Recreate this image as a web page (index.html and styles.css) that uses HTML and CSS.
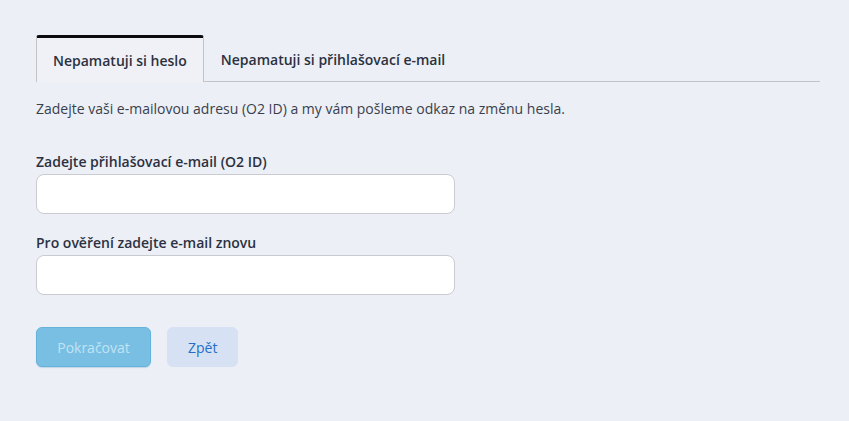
FILE: index.html
```html
<!DOCTYPE html>
<html lang="cs">
<head>
<meta charset="utf-8">
<title>Zapomenuté heslo</title>
<link rel="stylesheet" href="styles.css">
</head>
<body>
<main class="page">
  <nav class="tabs">
    <a class="tab tab--active">Nepamatuji si heslo</a>
    <a class="tab">Nepamatuji si přihlašovací e-mail</a>
  </nav>
  <p class="intro">Zadejte vaši e-mailovou adresu (O2 ID) a my vám pošleme odkaz na změnu hesla.</p>
  <form class="form">
    <label class="field">
      <span class="field__label">Zadejte přihlašovací e-mail (O2 ID)</span>
      <input class="field__input" type="email">
    </label>
    <label class="field">
      <span class="field__label">Pro ověření zadejte e-mail znovu</span>
      <input class="field__input" type="email">
    </label>
    <div class="actions">
      <button class="btn btn--primary" type="button" disabled>Pokračovat</button>
      <button class="btn btn--secondary" type="button">Zpět</button>
    </div>
  </form>
</main>
</body>
</html>
```
FILE: styles.css
```css
html, body {
  margin: 0;
  padding: 0;
  background: #eceff6;
}

body {
  font-family: "Open Sans", "Noto Sans", sans-serif;
  font-size: 14px;
  color: #2f3442;
}

.page {
  padding: 35px 29px 40px 36px;
}

.tabs {
  display: flex;
  border-bottom: 1px solid #c4c4c8;
  height: 46px;
}

.tab {
  display: flex;
  align-items: center;
  padding: 2px 17px 0;
  font-weight: 600;
  color: #2b3140;
  cursor: pointer;
  box-sizing: border-box;
  height: 47px;
}

.tab--active {
  background: #eff1f7;
  border-top: 3px solid #0b0b0f;
  border-left: 1px solid #c4c4c8;
  border-right: 1px solid #c4c4c8;
  border-radius: 3px 3px 0 0;
  padding: 0 16px 0 16px;
}

.intro {
  margin: 17px 0 0;
  line-height: 20px;
  color: #3a3f4c;
}

.form {
  margin-top: 33px;
  display: flex;
  flex-direction: column;
}

.field {
  display: flex;
  flex-direction: column;
  margin-bottom: 19px;
}

.field__label {
  font-weight: 600;
  line-height: 20px;
  margin-bottom: 2px;
  color: #2b3140;
}

.field__input {
  width: 419px;
  height: 40px;
  box-sizing: border-box;
  border: 1px solid #c9cbd1;
  border-radius: 8px;
  background: #fff;
  font: inherit;
  padding: 0 12px;
}

.actions {
  display: flex;
  gap: 16px;
  margin-top: 13px;
}

.btn {
  height: 40px;
  box-sizing: border-box;
  border-radius: 6px;
  font-family: inherit;
  font-size: 14px;
  padding: 0 20px;
  cursor: pointer;
}

.btn--primary {
  width: 115px;
  background: #78bfe3;
  border: 1px solid #67b2db;
  color: #c2e3f3;
  box-shadow: 0 1px 1px rgba(60, 140, 190, 0.25);
}

.btn--secondary {
  width: 71px;
  background: #d6e2f3;
  border: 1px solid #d6e2f3;
  color: #1f6fcb;
}
```
